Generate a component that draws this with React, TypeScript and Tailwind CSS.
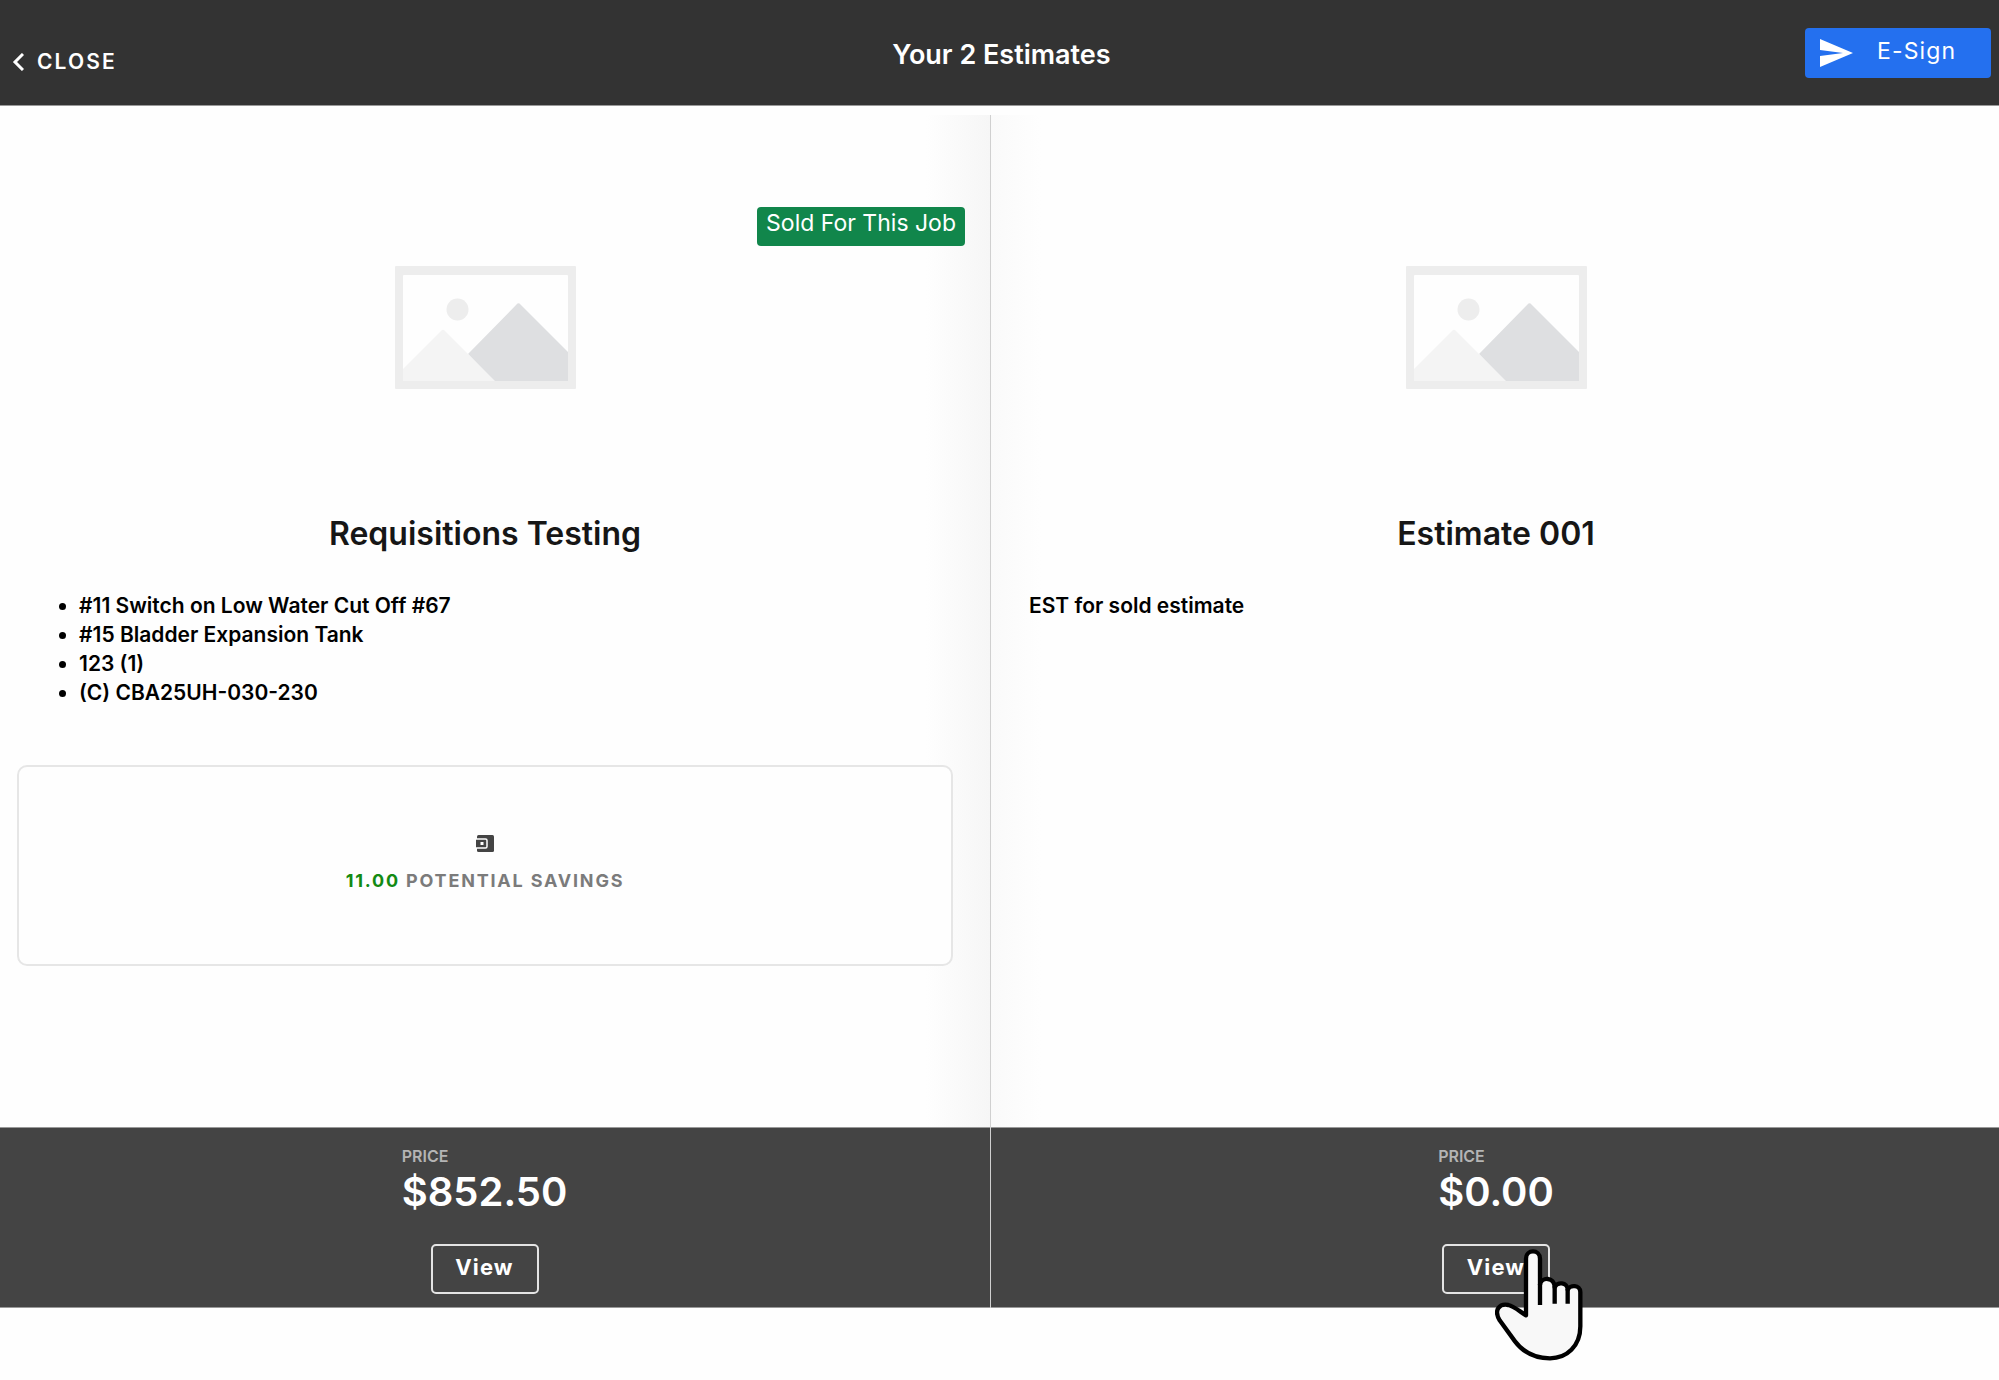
import { ReactNode } from "react"

function Placeholder() {
  return (
    <svg viewBox="0 0 181 123" className="w-[181px] h-[123px]" role="img" aria-label="No image">
      <rect width="181" height="123" rx="1" fill="#ededed" />
      <rect x="8" y="9" width="165" height="106" rx="1" fill="#fefefe" />
      <circle cx="62.500" cy="43.500" r="11" fill="#ededed" />
      <path d="M73 88 L121.500 38.500 Q123.500 36 125.500 38.500 L173 86 V115 H99 Z" fill="#dedfe1" />
      <path d="M8 103 L46.500 64.500 Q48 63 49.500 64.500 L100 115 H8 Z" fill="#f4f4f4" />
    </svg>
  )
}

function PointerHand() {
  return (
    <svg
      viewBox="285 420 264 339"
      className="absolute left-[53px] top-[4px] w-[88px] h-[113px] pointer-events-none"
      aria-hidden="true"
    >
      <path
        d="M378 622 V452 C378 423 420 423 420 452 V530 C424 506 464 506 464 538 C470 520 503 522 503 545 C509 530 541 530 541 552 V655 C541 715 500 751 450 751 C405 751 370 733 345 700 L299 637 C280 605 299 586 325 591 C342 595 360 611 378 622 Z"
        fill="#f8f8f8"
        stroke="#000"
        strokeWidth="13"
        strokeLinejoin="round"
      />
      <path d="M420 528 V591 M464 535 V587 M503 543 V587" fill="none" stroke="#000" strokeWidth="13" />
    </svg>
  )
}

function EstimateColumn({
  title,
  price,
  badge,
  className,
  bodyClassName,
  footerClassName,
  pointer,
  children,
}: {
  title: string
  price: string
  badge?: string
  className: string
  bodyClassName: string
  footerClassName: string
  pointer?: boolean
  children: ReactNode
}) {
  return (
    <section className={`flex flex-col ${className}`}>
      <div className={`relative flex-1 flex flex-col pt-[151px] ${bodyClassName}`}>
        {badge && (
          <span className="absolute right-[25px] top-[92px] h-[39px] px-[9px] rounded bg-[#11864b] text-white text-[23px] leading-[32px] whitespace-nowrap">
            {badge}
          </span>
        )}
        <div className="flex justify-center">
          <Placeholder />
        </div>
        <h2 className="mt-[125px] text-center text-[32px] leading-10 font-semibold text-[#161616]">{title}</h2>
        {children}
      </div>
      <div className={`h-[181px] bg-[#444] border-y border-[#999] pt-[18px] text-white ${footerClassName}`}>
        <div className="flex flex-col items-center">
          <div>
            <div className="text-[16px] leading-5 font-semibold text-[#b4b4b4]">PRICE</div>
            <div className="text-[40px] leading-[52px] font-semibold">{price}</div>
          </div>
          <div className="relative mt-[26px]">
            <button
              type="button"
              className="w-[108px] h-[50px] pb-1 border-2 border-[#e4e4e4] rounded-[5px] text-[22px] leading-6 font-bold tracking-wider"
            >
              View
            </button>
            {pointer && <PointerHand />}
          </div>
        </div>
      </div>
    </section>
  )
}

export default function App() {
  return (
    <div className="min-h-screen flex flex-col bg-[#fefefe] pb-[72px] font-['Inter',sans-serif] text-black">
      <header className="h-[106px] grid grid-cols-3 bg-[#333] border-b border-[#999] text-white">
        <button type="button" className="flex items-center justify-self-start gap-[13px] pl-3 pt-[18px] text-[21px] leading-6 font-semibold tracking-widest">
          <svg viewBox="0 0 12 18" className="w-3 h-[18px]" fill="none" stroke="currentColor" strokeWidth="3" aria-hidden="true">
            <path d="M11 1 L3 9 L11 17" />
          </svg>
          CLOSE
        </button>
        <h1 className="self-center justify-self-center pt-1 pl-1 text-[27px] leading-8 font-semibold">Your 2 Estimates</h1>
        <button
          type="button"
          className="justify-self-end mt-7 mr-2 w-[186px] h-[50px] pl-[15px] pb-1 flex items-center gap-6 rounded bg-[#2470ef] text-[23px] leading-6 tracking-wider"
        >
          <svg viewBox="0 0 33 28" className="mt-1 w-[33px] h-7 shrink-0" fill="currentColor" aria-hidden="true">
            <path d="M0 0 L33 14 L0 28 V17 L23 14 L0 11 Z" />
          </svg>
          E-Sign
        </button>
      </header>

      <main className="flex-1 mt-[9px] grid grid-cols-[991fr_1008fr]">
        <EstimateColumn
          title="Requisitions Testing"
          price="$852.50"
          badge="Sold For This Job"
          className="border-r border-[#d0d0d0]"
          bodyClassName="pl-[17px] pr-[37px] bg-[linear-gradient(to_left,#f6f6f6,#fefefe_64px)]"
          footerClassName="pr-[21px]"
        >
          <ul className="mt-[37px] ml-[62px] list-disc text-[21px] leading-[29px] font-semibold">
            <li>#11 Switch on Low Water Cut Off #67</li>
            <li>#15 Bladder Expansion Tank</li>
            <li>123 (1)</li>
            <li>(C) CBA25UH-030-230</li>
          </ul>
          <div className="mt-[58px] h-[201px] pt-[68px] flex flex-col items-center border-2 border-[#e6e6e6] rounded-[10px] bg-[#fefefe]">
            <svg viewBox="0 0 18 17" className="w-[18px] h-[17px]" aria-hidden="true">
              <rect x="1" width="17" height="17" rx="1.500" fill="#444" />
              <path d="M0 4 H9.500 Q11 4 11 5.500 V11.500 Q11 13 9.500 13 H0" fill="#444" stroke="#fefefe" strokeWidth="1.500" />
              <rect x="4.500" y="7" width="3" height="3" fill="#fefefe" />
            </svg>
            <p className="mt-[17px] text-[18px] leading-6 font-bold tracking-widest text-[#7b7b7b]">
              <span className="text-[#138a13]">11.00</span> POTENTIAL SAVINGS
            </p>
          </div>
        </EstimateColumn>
        <EstimateColumn
          title="Estimate 001"
          price="$0.00"
          className=""
          bodyClassName="pl-[38px] pr-[36px] bg-[linear-gradient(to_right,#fafafa,#fefefe_50px)]"
          footerClassName="pl-[2px]"
          pointer
        >
          <p className="mt-[37px] text-[21px] leading-[29px] font-semibold">EST for sold estimate</p>
        </EstimateColumn>
      </main>
    </div>
  )
}
